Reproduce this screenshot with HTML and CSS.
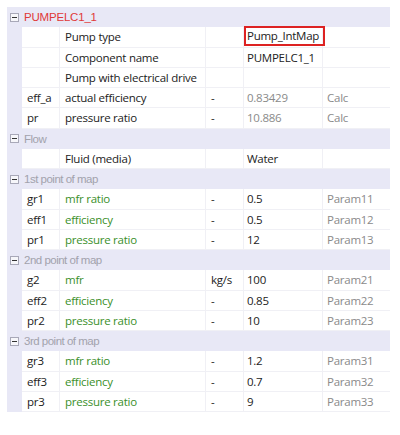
FILE: index.html
```html
<!DOCTYPE html>
<html>
<head>
  <title>PUMPELC1_1 properties</title>
  <link rel="stylesheet" href="styles.css">
</head>
<body>
  <div class="grid">
    <div class="group"><span class="toggle"></span><span class="group-title comp">PUMPELC1_1</span></div>

    <div class="gut"></div><div class="c"></div><div class="c">Pump type</div><div class="c"></div><div class="c val"><span class="selected">Pump_IntMap</span></div><div class="c none"></div>
    <div class="gut"></div><div class="c"></div><div class="c">Component name</div><div class="c"></div><div class="c val">PUMPELC1_1</div><div class="c none"></div>
    <div class="gut"></div><div class="c"></div><div class="c">Pump with electrical drive</div><div class="c"></div><div class="c"></div><div class="c none"></div>
    <div class="gut"></div><div class="c">eff_a</div><div class="c">actual efficiency</div><div class="c">-</div><div class="c val calc">0.83429</div><div class="c src">Calc</div>
    <div class="gut"></div><div class="c">pr</div><div class="c">pressure ratio</div><div class="c">-</div><div class="c val calc">10.886</div><div class="c src">Calc</div>

    <div class="group"><span class="toggle"></span><span class="group-title">Flow</span></div>
    <div class="gut"></div><div class="c"></div><div class="c">Fluid (media)</div><div class="c"></div><div class="c val">Water</div><div class="c none"></div>

    <div class="group"><span class="toggle"></span><span class="group-title">1st point of map</span></div>
    <div class="gut"></div><div class="c">gr1</div><div class="c param">mfr ratio</div><div class="c">-</div><div class="c val">0.5</div><div class="c src">Param11</div>
    <div class="gut"></div><div class="c">eff1</div><div class="c param">efficiency</div><div class="c">-</div><div class="c val">0.5</div><div class="c src">Param12</div>
    <div class="gut"></div><div class="c">pr1</div><div class="c param">pressure ratio</div><div class="c">-</div><div class="c val">12</div><div class="c src">Param13</div>

    <div class="group"><span class="toggle"></span><span class="group-title">2nd point of map</span></div>
    <div class="gut"></div><div class="c">g2</div><div class="c param">mfr</div><div class="c">kg/s</div><div class="c val">100</div><div class="c src">Param21</div>
    <div class="gut"></div><div class="c">eff2</div><div class="c param">efficiency</div><div class="c">-</div><div class="c val">0.85</div><div class="c src">Param22</div>
    <div class="gut"></div><div class="c">pr2</div><div class="c param">pressure ratio</div><div class="c">-</div><div class="c val">10</div><div class="c src">Param23</div>

    <div class="group"><span class="toggle"></span><span class="group-title">3rd point of map</span></div>
    <div class="gut"></div><div class="c">gr3</div><div class="c param">mfr ratio</div><div class="c">-</div><div class="c val">1.2</div><div class="c src">Param31</div>
    <div class="gut"></div><div class="c">eff3</div><div class="c param">efficiency</div><div class="c">-</div><div class="c val">0.7</div><div class="c src">Param32</div>
    <div class="gut"></div><div class="c">pr3</div><div class="c param">pressure ratio</div><div class="c">-</div><div class="c val">9</div><div class="c src">Param33</div>
  </div>
</body>
</html>
```
FILE: styles.css
```css
body {
  margin: 0;
  padding: 7px 0 0 7px;
  background: #fff;
  font-family: "Open Sans", "Noto Sans", sans-serif;
  font-size: 11.5px;
  letter-spacing: -0.25px;
  color: #222;
}
.grid {
  display: grid;
  grid-template-columns: 15px 38px 146px 38px 79px 67px;
  grid-auto-rows: 20.25px;
  width: 383px;
}
.group {
  grid-column: 1 / -1;
  background: #e8e8f6;
  display: flex;
  align-items: center;
}
.toggle {
  position: relative;
  width: 7px;
  height: 7px;
  margin: 0 5px 0 3px;
  border: 1px solid #a8a8b8;
  background: #f6f6fa;
}
.toggle::after {
  content: "";
  position: absolute;
  left: 1px;
  right: 1px;
  top: 3px;
  height: 1px;
  background: #333;
}
.group-title {
  font-family: "Liberation Sans", Arial, sans-serif;
  font-size: 11.5px;
  letter-spacing: -0.5px;
  color: #a2a2ac;
}
.group-title.comp {
  color: #e03838;
  letter-spacing: -0.2px;
}
.gut {
  background: #e8e8f6;
}
.c {
  display: flex;
  align-items: center;
  padding-left: 5px;
  border-right: 1px solid #f0f0f5;
  border-bottom: 1px solid #f0f0f5;
  white-space: nowrap;
}
.val {
  padding-left: 3px;
}
.none {
  border-right: none;
}
.param {
  color: #3a8f2a;
}
.calc {
  color: #8a8a8a;
}
.src {
  color: #8a8a8a;
  padding-left: 4px;
  border-right: none;
}
.selected {
  border: 2px solid #dd2222;
  padding: 0 4px 1px 1px;
  margin-left: -3px;
  margin-top: -1px;
}
```
